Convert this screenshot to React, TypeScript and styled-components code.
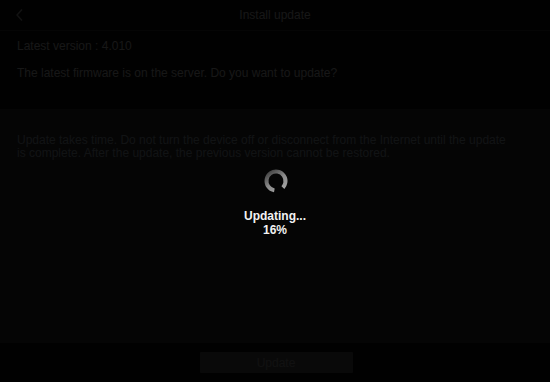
import React from "react";
import styled, { createGlobalStyle } from "styled-components";

const Global = createGlobalStyle`
  html, body { margin: 0; padding: 0; background: #000; }
  body { font-family: "Liberation Sans", Arial, sans-serif; }
  * { box-sizing: border-box; }
`;

const Page = styled.div`
  position: relative;
  width: 550px;
  height: 382px;
  background: #0a0a0a;
  color: #fff;
  display: flex;
  flex-direction: column;
  overflow: hidden;
`;

const Header = styled.header`
  height: 31px;
  flex: none;
  display: flex;
  align-items: center;
  justify-content: center;
  position: relative;
  border-bottom: 1px solid #262626;
  font-size: 12px;
  color: #a0a0a0;
`;

const Back = styled.button`
  position: absolute;
  left: 12px;
  top: 7px;
  width: 16px;
  height: 16px;
  padding: 0;
  border: 0;
  background: none;
  color: #808080;
  display: flex;
  align-items: center;
  justify-content: center;
`;

const Info = styled.section`
  padding: 9px 17px 0;
  display: flex;
  flex-direction: column;
  gap: 14px;
  font-size: 12px;
  line-height: 13px;
  color: #a0a0a0;
  height: 78px;
  flex: none;
`;

const Panel = styled.section`
  flex: 1;
  background: #262626;
  padding: 25px 40px 0 17px;
  font-size: 12px;
  line-height: 13px;
  color: #7a8591;
`;

const Footer = styled.footer`
  height: 39px;
  flex: none;
  display: flex;
  justify-content: center;
  align-items: center;
  padding-left: 2px;
`;

const UpdateButton = styled.button`
  width: 153px;
  height: 21px;
  border: 0;
  border-radius: 1px;
  background: #444;
  color: #7a7a7a;
  font-family: "Liberation Sans", Arial, sans-serif;
  font-size: 12px;
  padding: 0;
`;

const Overlay = styled.div`
  position: absolute;
  inset: 0;
  background: rgba(0, 0, 0, 0.86);
  display: flex;
  flex-direction: column;
  align-items: center;
  padding-top: 167px;
`;

const Spinner = styled.svg`
  width: 28px;
  height: 28px;
  margin-left: 1px;
`;

const Status = styled.div`
  margin-top: 14px;
  text-align: center;
  font-size: 12px;
  line-height: 14px;
  font-weight: bold;
  color: #f2f2f2;
`;

export default function App() {
  return (
    <>
      <Global />
      <Page>
        <Header>
          <Back aria-label="Back">
            <svg width="10" height="14" viewBox="0 0 10 14" fill="none">
              <path d="M7 1.5 L2 7 L7 12.5" stroke="currentColor" strokeWidth="1.4" />
            </svg>
          </Back>
          Install update
        </Header>
        <Info>
          <div>Latest version : 4.010</div>
          <div>The latest firmware is on the server. Do you want to update?</div>
        </Info>
        <Panel>
          Update takes time. Do not turn the device off or disconnect from the Internet until the update
          is complete. After the update, the previous version cannot be restored.
        </Panel>
        <Footer>
          <UpdateButton>Update</UpdateButton>
        </Footer>
        <Overlay>
          <Spinner viewBox="0 0 28 28">
            <defs>
              <linearGradient id="sg" x1="0" y1="1" x2="1" y2="0">
                <stop offset="0" stopColor="#3a3a3a" />
                <stop offset="0.5" stopColor="#8a8a8a" />
                <stop offset="1" stopColor="#a8a8a8" />
              </linearGradient>
            </defs>
            <circle
              cx="14"
              cy="14"
              r="9.5"
              fill="none"
              stroke="url(#sg)"
              strokeWidth="4"
              strokeDasharray="50 10"
              transform="rotate(100 14 14)"
            />
          </Spinner>
          <Status>
            Updating...
            <br />
            16%
          </Status>
        </Overlay>
      </Page>
    </>
  );
}
